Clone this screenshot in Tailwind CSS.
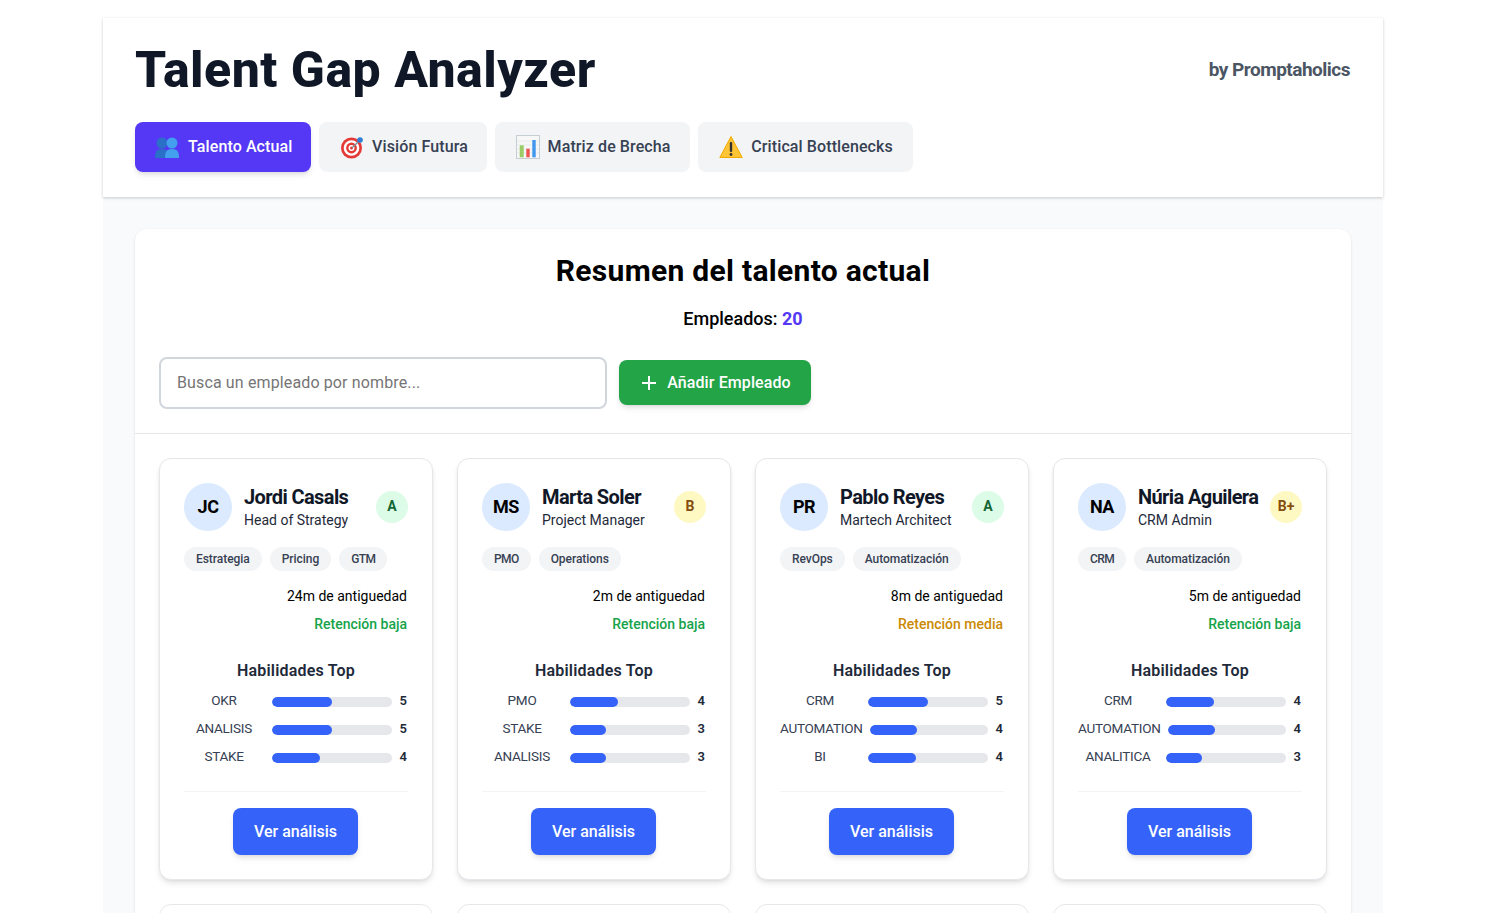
<!DOCTYPE html>
<html lang="es">
  <head>
    <meta charset="UTF-8" />
    <title>Talent Gap Analyzer</title>
    <script src="https://cdn.jsdelivr.net/npm/@tailwindcss/browser@4"></script>
  </head>
  <body class="bg-white h-[913px] overflow-hidden font-[Roboto,sans-serif] text-black">
    <div class="w-[1280px] ml-[103px] mt-[18px] bg-gray-50 min-h-[895px]">
      <!-- Cabecera -->
      <header class="bg-white shadow-[0_1px_3px_rgba(0,0,0,0.2)] px-8 pt-5 pb-6 h-[179px]">
        <div class="flex items-center justify-between h-[64px]">
          <h1 class="text-[50px] leading-[64px] font-extrabold text-gray-900 tracking-[0.5px]">Talent Gap Analyzer</h1>
          <span class="text-[19px] font-bold text-[#4b5563] tracking-[-0.5px] pr-px">by Promptaholics</span>
        </div>
        <!-- Tabs -->
        <nav class="flex gap-2 mt-5 text-[16px] font-medium tracking-[0.1px]">
          <button class="h-[50px] w-[176.4px] rounded-lg bg-[#5438f5] text-white flex items-center justify-center gap-2 shadow-md">
            <svg class="w-[26px] h-6" viewBox="0 0 26 24"><circle cx="8" cy="8" r="5.500" fill="#2a70c8"/><path d="M1 23c0-6 1.500-9 7-9s7 3 7 9z" fill="#2a70c8"/><circle cx="18" cy="8" r="5.500" fill="#42a0ee"/><path d="M11 23c0-6 1.500-9 7-9s7 3 7 9z" fill="#42a0ee"/></svg>
            Talento Actual
          </button>
          <button class="h-[50px] w-[167.2px] rounded-lg bg-gray-100 text-gray-700 flex items-center justify-center gap-2">
            <svg class="w-6 h-6 ml-0.5" viewBox="0 0 24 24"><circle cx="11.500" cy="13" r="10.500" fill="#e53935"/><circle cx="11.500" cy="13" r="7.800" fill="#fff"/><circle cx="11.500" cy="13" r="5.400" fill="#e53935"/><circle cx="11.500" cy="13" r="3" fill="#fff"/><circle cx="11.500" cy="13" r="1.500" fill="#e53935"/><path d="M12 13l8-8" stroke="#78909c" stroke-width="1.200"/><circle cx="20" cy="5" r="2.800" fill="#2f7fd6"/></svg>
            Visión Futura
          </button>
          <button class="h-[50px] w-[195px] rounded-lg bg-gray-100 text-gray-700 flex items-center justify-center gap-2">
            <svg class="w-6 h-6 ml-0.5" viewBox="0 0 24 24"><rect x=".5" y=".5" width="23" height="23" fill="#f7f7f7" stroke="#c5ced3" stroke-width="1"/><path d="M1 6h22M1 10h22M1 14h22M1 18h22" stroke="#dfe4e7" stroke-width=".7"/><rect x="3.700" y="10.300" width="4" height="12" fill="#9ccc65"/><rect x="10.300" y="13.700" width="3.400" height="8.600" fill="#ef5350"/><rect x="16.300" y="5" width="3.400" height="17.300" fill="#3f97ee"/></svg>
            Matriz de Brecha
          </button>
          <button class="h-[50px] w-[215px] rounded-lg bg-gray-100 text-gray-700 flex items-center justify-center gap-2">
            <svg class="w-6 h-6 ml-0.5" viewBox="0 0 24 24"><path d="M12 1.500L23.200 22.500H.800z" fill="#fdc435" stroke="#f2a900" stroke-width="1" stroke-linejoin="round"/><rect x="10.800" y="7" width="2.400" height="10" rx="1" fill="#333"/><circle cx="12" cy="19.500" r="1.400" fill="#333"/></svg>
            Critical Bottlenecks
          </button>
        </nav>
      </header>

      <main class="px-8 pt-8">
        <section class="bg-white rounded-xl shadow-sm">
          <div class="border-b border-gray-200 h-[205px] pt-[20px]">
            <h2 class="text-center text-[30px] leading-[44px] font-bold tracking-[0.3px]">Resumen del talento actual</h2>
            <p class="text-center text-[18px] leading-[28px] font-medium mt-[12px]">Empleados: <span class="text-[#5438f5] font-bold">20</span></p>
            <div class="flex items-start gap-3 mt-[24px] px-6">
              <input class="w-[448px] h-[52px] rounded-lg border-2 border-gray-300 px-4 pb-[2px] text-[16px] tracking-[0.13px] placeholder:text-[#757575]" placeholder="Busca un empleado por nombre..." />
              <button class="mt-[3px] h-[45px] w-[192px] rounded-lg bg-[#22a447] text-white text-[16px] font-medium tracking-[0.1px] flex items-center justify-center gap-2 shadow-md">
                <svg class="w-5 h-5" viewBox="0 0 20 20" fill="none" stroke="currentColor" stroke-width="2"><path d="M10 3v14M3 10h14"/></svg>
                Añadir Empleado
              </button>
            </div>
          </div>
          <div id="cards" class="grid grid-cols-4 gap-6 p-6"></div>
        </section>
      </main>
    </div>

    <script>
      var empleados = [
        { ini: "JC", nombre: "Jordi Casals", rol: "Head of Strategy", nota: "A", tags: ["Estrategia", "Pricing", "GTM"], meses: "24m", ret: "baja", skills: [["OKR", 5], ["ANALISIS", 5], ["STAKE", 4]] },
        { ini: "MS", nombre: "Marta Soler", rol: "Project Manager", nota: "B", tags: ["PMO", "Operations"], meses: "2m", ret: "baja", skills: [["PMO", 4], ["STAKE", 3], ["ANALISIS", 3]] },
        { ini: "PR", nombre: "Pablo Reyes", rol: "Martech Architect", nota: "A", tags: ["RevOps", "Automatización"], meses: "8m", ret: "media", skills: [["CRM", 5], ["AUTOMATION", 4], ["BI", 4]] },
        { ini: "NA", nombre: "Núria Aguilera", rol: "CRM Admin", nota: "B+", tags: ["CRM", "Automatización"], meses: "5m", ret: "baja", skills: [["CRM", 4], ["AUTOMATION", 4], ["ANALITICA", 3]] },
      ];

      function tarjeta(e) {
        var notaClase = e.nota == "A" ? "bg-[#dcfce7] text-[#166534]" : "bg-[#fef9c3] text-[#854d0e]";
        var retClase = e.ret == "media" ? "text-[#ca8a04]" : "text-[#16a34a]";
        var tags = e.tags.map((t) => {
          var ajuste = t == t.toUpperCase() ? "tracking-[-0.6px]" : "tracking-[-0.05px]";
          return `<span class="h-6 px-3 rounded-full bg-gray-100 text-gray-700 text-[12px] font-medium flex items-center ${ajuste}">${t}</span>`;
        }).join("");
        var skills = e.skills.map((s) => `
          <div class="flex items-center gap-2 h-5 mb-2">
            <span class="min-w-[80px] pb-[2px] text-center text-[13.5px] tracking-[-0.25px] text-gray-700 whitespace-nowrap">${s[0]}</span>
            <div class="w-[120px] shrink h-2.5 mt-0.5 rounded-full bg-gray-200 overflow-hidden"><div class="h-full rounded-full bg-[#3563fa]" style="width:${s[1] * 10}%"></div></div>
            <span class="w-2 shrink-0 flex justify-end pr-px pb-px text-[13px] font-semibold text-gray-800">${s[1]}</span>
          </div>`).join("");
        return `
        <article class="h-[422px] rounded-xl border border-gray-200 bg-white shadow-md px-6 pt-6">
          <div class="flex items-center gap-3">
            <div class="w-12 h-12 shrink-0 pb-0.5 rounded-full bg-[#dbeafe] flex items-center justify-center text-[18px] font-bold tracking-[-0.5px]">${e.ini}</div>
            <div class="flex-1 min-w-0 pb-0.5 whitespace-nowrap">
              <div class="text-[20px] leading-[28px] font-bold text-gray-900 tracking-[-0.6px]">${e.nombre}</div>
              <div class="text-[14px] leading-[18px] text-gray-800">${e.rol}</div>
            </div>
            <div class="w-8 h-8 shrink-0 pb-0.5 rounded-full flex items-center justify-center text-[14px] font-bold ${notaClase}">${e.nota}</div>
          </div>
          <div class="flex gap-2 mt-4">${tags}</div>
          <div class="text-right text-[14px] leading-[20px] mt-[15px] pr-px">${e.meses} de antiguedad</div>
          <div class="text-right text-[14px] leading-[20px] mt-2 pr-px font-medium ${retClase}">Retención ${e.ret}</div>
          <h3 class="text-center text-[16px] leading-[24px] font-semibold tracking-[0.2px] text-gray-800 mt-[25px] mb-[8px]">Habilidades Top</h3>
          ${skills}
          <div class="border-t border-gray-100 mt-[24px] pt-4 pr-px flex justify-center">
            <button class="h-[47px] w-[125px] rounded-lg bg-[#3563fa] text-white text-[16px] font-medium shadow-md">Ver análisis</button>
          </div>
        </article>`;
      }

      var html = empleados.map(tarjeta).join("");
      // Segunda fila: solo asoma el borde superior
      html += '<div class="h-[422px] rounded-xl border border-gray-200 bg-white"></div>'.repeat(4);
      document.getElementById("cards").innerHTML = html;
    </script>
  </body>
</html>
